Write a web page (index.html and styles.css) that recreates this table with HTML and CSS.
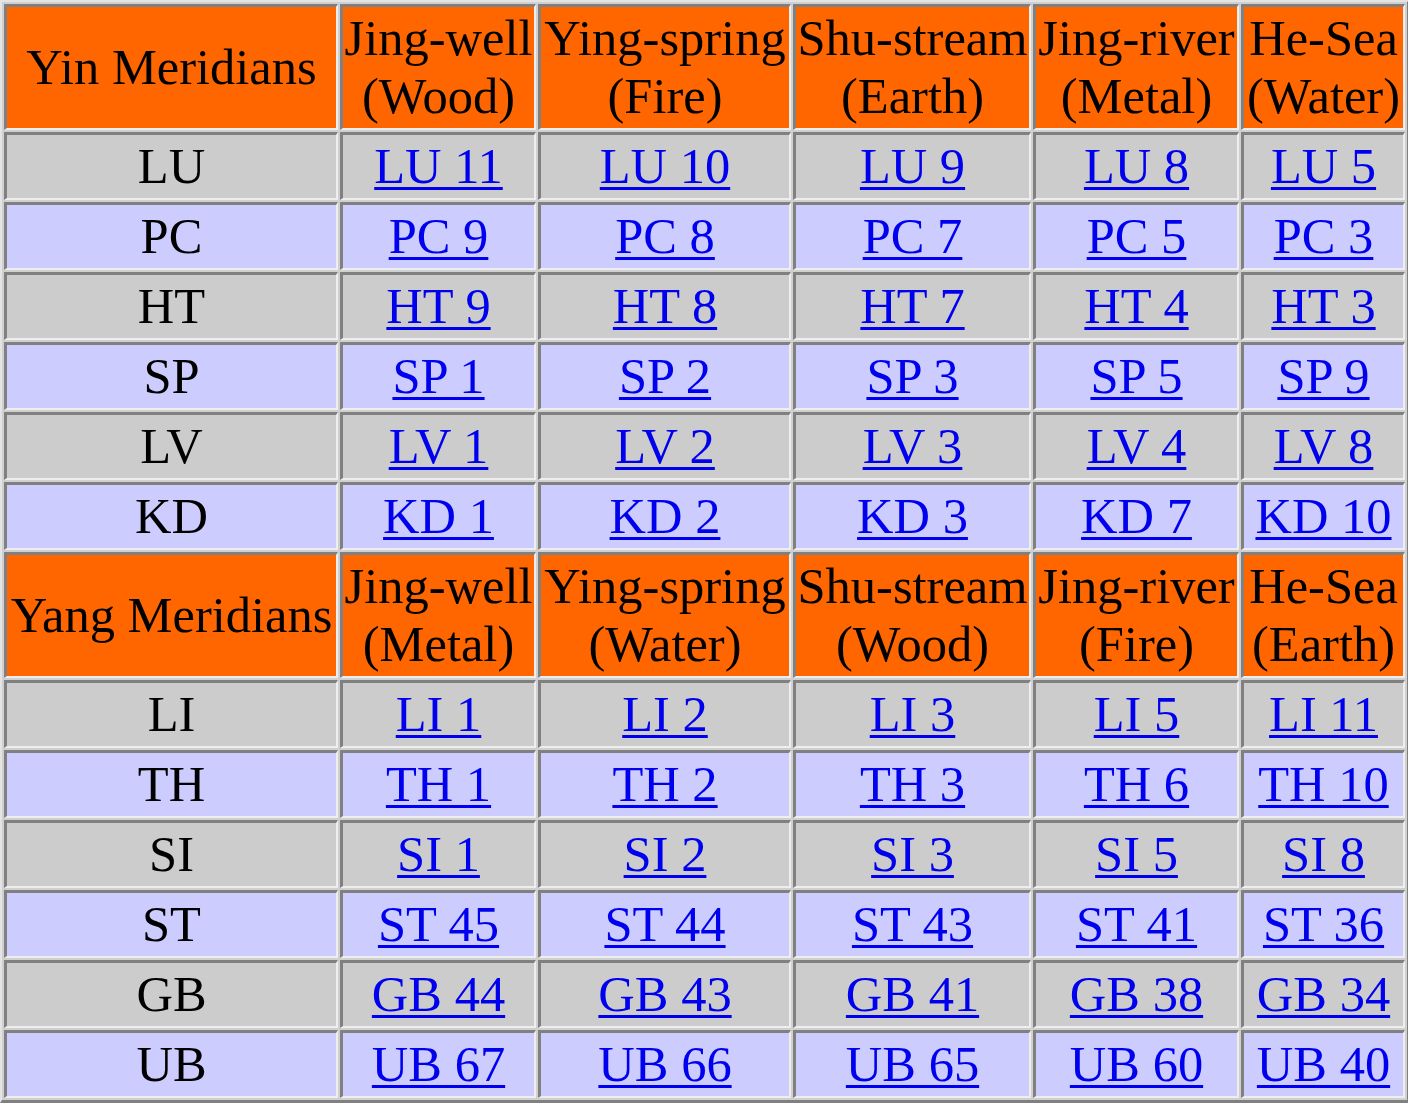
FILE: index.html
```html
<!DOCTYPE html>
<html>
<head>
<meta charset="utf-8">
<title>Five Shu Points</title>
<link rel="stylesheet" href="styles.css">
</head>
<body>
<table class="shu">
  <colgroup>
    <col class="c1"><col class="c2"><col class="c3"><col class="c4"><col class="c5"><col class="c6">
  </colgroup>
  <tbody>
    <tr class="head">
      <td>Yin Meridians</td>
      <td>Jing-well<br>(Wood)</td>
      <td>Ying-spring<br>(Fire)</td>
      <td>Shu-stream<br>(Earth)</td>
      <td>Jing-river<br>(Metal)</td>
      <td>He-Sea<br>(Water)</td>
    </tr>
    <tr class="gray"><td>LU</td><td><a href="#">LU 11</a></td><td><a href="#">LU 10</a></td><td><a href="#">LU 9</a></td><td><a href="#">LU 8</a></td><td><a href="#">LU 5</a></td></tr>
    <tr class="blue"><td>PC</td><td><a href="#">PC 9</a></td><td><a href="#">PC 8</a></td><td><a href="#">PC 7</a></td><td><a href="#">PC 5</a></td><td><a href="#">PC 3</a></td></tr>
    <tr class="gray"><td>HT</td><td><a href="#">HT 9</a></td><td><a href="#">HT 8</a></td><td><a href="#">HT 7</a></td><td><a href="#">HT 4</a></td><td><a href="#">HT 3</a></td></tr>
    <tr class="blue"><td>SP</td><td><a href="#">SP 1</a></td><td><a href="#">SP 2</a></td><td><a href="#">SP 3</a></td><td><a href="#">SP 5</a></td><td><a href="#">SP 9</a></td></tr>
    <tr class="gray"><td>LV</td><td><a href="#">LV 1</a></td><td><a href="#">LV 2</a></td><td><a href="#">LV 3</a></td><td><a href="#">LV 4</a></td><td><a href="#">LV 8</a></td></tr>
    <tr class="blue"><td>KD</td><td><a href="#">KD 1</a></td><td><a href="#">KD 2</a></td><td><a href="#">KD 3</a></td><td><a href="#">KD 7</a></td><td><a href="#">KD 10</a></td></tr>
    <tr class="head">
      <td>Yang Meridians</td>
      <td>Jing-well<br>(Metal)</td>
      <td>Ying-spring<br>(Water)</td>
      <td>Shu-stream<br>(Wood)</td>
      <td>Jing-river<br>(Fire)</td>
      <td>He-Sea<br>(Earth)</td>
    </tr>
    <tr class="gray"><td>LI</td><td><a href="#">LI 1</a></td><td><a href="#">LI 2</a></td><td><a href="#">LI 3</a></td><td><a href="#">LI 5</a></td><td><a href="#">LI 11</a></td></tr>
    <tr class="blue"><td>TH</td><td><a href="#">TH 1</a></td><td><a href="#">TH 2</a></td><td><a href="#">TH 3</a></td><td><a href="#">TH 6</a></td><td><a href="#">TH 10</a></td></tr>
    <tr class="gray"><td>SI</td><td><a href="#">SI 1</a></td><td><a href="#">SI 2</a></td><td><a href="#">SI 3</a></td><td><a href="#">SI 5</a></td><td><a href="#">SI 8</a></td></tr>
    <tr class="blue"><td>ST</td><td><a href="#">ST 45</a></td><td><a href="#">ST 44</a></td><td><a href="#">ST 43</a></td><td><a href="#">ST 41</a></td><td><a href="#">ST 36</a></td></tr>
    <tr class="gray"><td>GB</td><td><a href="#">GB 44</a></td><td><a href="#">GB 43</a></td><td><a href="#">GB 41</a></td><td><a href="#">GB 38</a></td><td><a href="#">GB 34</a></td></tr>
    <tr class="blue"><td>UB</td><td><a href="#">UB 67</a></td><td><a href="#">UB 66</a></td><td><a href="#">UB 65</a></td><td><a href="#">UB 60</a></td><td><a href="#">UB 40</a></td></tr>
  </tbody>
</table>
</body>
</html>
```

FILE: styles.css
```css
html, body {
  margin: 0;
  padding: 0;
  background: #ffffff;
}

.shu {
  table-layout: fixed;
  border-collapse: separate;
  border-spacing: 2px;
  width: 1408px;
  background: #d0d0d0;
  border-style: solid;
  border-width: 2px 3px 3px 2px;
  border-color: #e4e4e4 #808080 #808080 #e4e4e4;
  font-family: "Liberation Serif", "Times New Roman", serif;
  font-size: 50.5px;
  line-height: 58px;
  color: #000000;
}

.c1 { width: 334px; }
.c2 { width: 196px; }
.c3 { width: 253px; }
.c4 { width: 238px; }
.c5 { width: 206px; }
.c6 { width: 164px; }

.shu td {
  text-align: center;
  vertical-align: middle;
  white-space: nowrap;
  padding: 2px 0 3px 0;
  border-style: solid;
  border-width: 3px 2px 2px 3px;
  border-color: #808080 #eeeeee #eeeeee #808080;
}

.head td { background: #ff6600; }
.gray td { background: #cccccc; }
.blue td { background: #ccccff; }

.shu a {
  color: #0000ee;
  text-decoration: underline;
  text-decoration-thickness: 3px;
  text-underline-offset: 4px;
}
```
